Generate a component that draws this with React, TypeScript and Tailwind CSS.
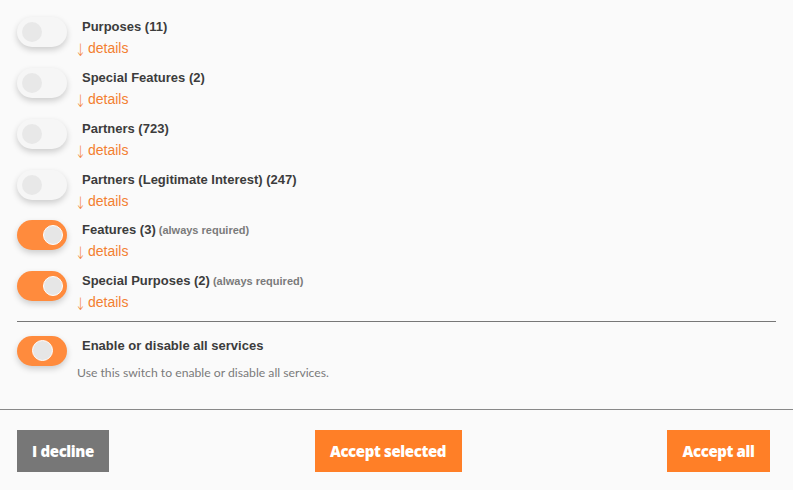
import React from "react";

type Row = { title: string; count: number; on: boolean; required?: boolean };

const ROWS: Row[] = [
  { title: "Purposes", count: 11, on: false },
  { title: "Special Features", count: 2, on: false },
  { title: "Partners", count: 723, on: false },
  { title: "Partners (Legitimate Interest)", count: 247, on: false },
  { title: "Features", count: 3, on: true, required: true },
  { title: "Special Purposes", count: 2, on: true, required: true },
];

function Toggle({ on, mid }: { on: boolean; mid?: boolean }) {
  let knob = "absolute top-[5px] left-[5px] w-[20px] h-[20px] rounded-full bg-[#e8e8e8]";
  if (on) knob = "absolute top-[5px] right-[4px] w-[20px] h-[20px] rounded-full bg-[#e6e6e6] border border-white";
  if (mid) knob = "absolute top-[4px] left-[15px] w-[21px] h-[21px] rounded-full bg-[#e6e6e6] border border-white";
  return (
    <div
      className={
        on
          ? "relative w-[50px] h-[30px] shrink-0 rounded-full bg-[#ff8b3d] shadow-[0_3px_6px_rgba(0,0,0,0.18)]"
          : "relative w-[50px] h-[30px] shrink-0 rounded-full bg-[#f6f6f6] shadow-[0_3px_6px_rgba(0,0,0,0.18)]"
      }
    >
      <div className={knob} />
    </div>
  );
}

export default function App() {
  return (
    <div className="w-[793px] h-[490px] bg-[#fafafa] flex flex-col font-['Liberation_Sans',Arial,sans-serif]">
      <div className="px-[17px] pt-[16px]">
        {ROWS.map((r, i) => (
          <div key={r.title} className={i < 4 ? "flex h-[51px] pt-px" : "flex h-[51px]"}>
            <Toggle on={r.on} />
            <div className="ml-[10px] flex flex-col">
              <div className="pl-[5px] leading-[20px] text-[13px] font-bold text-[#3c3c3c]">
                {r.title} ({r.count})
                {r.required && (
                  <span className="ml-[3px] text-[11px] text-[#7a7a7a]">(always required)</span>
                )}
              </div>
              <div className="flex items-center h-[22px] text-[14px] text-[#f37f30]">
                <span className="inline-block -ml-[2px] w-[13px] text-[17px] leading-none font-['DejaVu_Sans',sans-serif] font-light scale-x-75 origin-left translate-y-[2px]">
                  ↓
                </span>
                <span>details</span>
              </div>
            </div>
          </div>
        ))}
        <div className="h-px bg-[#777] -mt-[1px]" />
        <div className="flex mt-[14px]">
          <Toggle on mid />
          <div className="ml-[10px] flex flex-col">
            <div className="pl-[5px] leading-[20px] text-[13px] font-bold text-[#3c3c3c]">
              Enable or disable all services
            </div>
            <div className="mt-[9px] leading-[16px] text-[12.2px] text-[#7a7a7a] font-['Lato',sans-serif]">
              Use this switch to enable or disable all services.
            </div>
          </div>
        </div>
      </div>
      <div className="h-px bg-[#888] mt-[28px]" />
      <div className="flex justify-between items-center px-[17px] pt-[20px] pr-[23px] font-['Open_Sans',sans-serif]">
        <button className="h-[42px] w-[92px] bg-[#777] text-white text-[15px] font-extrabold tracking-tight">
          I decline
        </button>
        <button className="h-[42px] w-[147px] bg-[#ff7f27] text-white text-[15px] font-extrabold tracking-tight">
          Accept selected
        </button>
        <button className="h-[42px] w-[103px] bg-[#ff7f27] text-white text-[15px] font-extrabold tracking-tight">
          Accept all
        </button>
      </div>
    </div>
  );
}
